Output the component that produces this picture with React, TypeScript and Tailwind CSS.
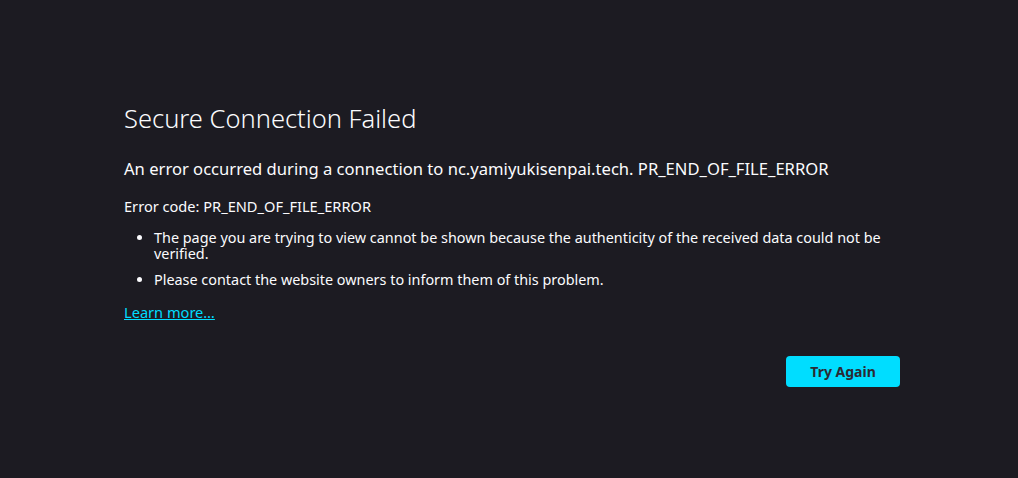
export default function App() {
  return (
    <div className="min-h-[478px] bg-[#1c1b22] text-[#fbfbfe] font-['Noto_Sans',sans-serif]">
      <div className="ml-[124px] w-[776px] pt-[102px]">
        <h1 className="text-[25.5px] leading-[32px] font-light">Secure Connection Failed</h1>
        <p className="mt-[23px] text-[16.6px] leading-[24px]">
          An error occurred during a connection to nc.yamiyukisenpai.tech. PR_END_OF_FILE_ERROR
        </p>
        <p className="mt-[15px] text-[14.6px] leading-[20px]">Error code: PR_END_OF_FILE_ERROR</p>
        <ul className="mt-[14px] list-disc pl-[30px] text-[14.4px] leading-[16px]">
          <li>
            The page you are trying to view cannot be shown because the authenticity of the received data could not be
            verified.
          </li>
          <li className="mt-[10px]">Please contact the website owners to inform them of this problem.</li>
        </ul>
        <a href="#" className="mt-[14px] block w-fit text-[14.6px] leading-[20px] text-[#00ddff] underline">
          Learn more…
        </a>
        <div className="mt-[34px] flex justify-end">
          <button className="h-[31px] w-[114px] rounded-[4px] bg-[#00ddff] text-[14px] font-bold text-[#2b2a33]">
            Try Again
          </button>
        </div>
      </div>
    </div>
  );
}
